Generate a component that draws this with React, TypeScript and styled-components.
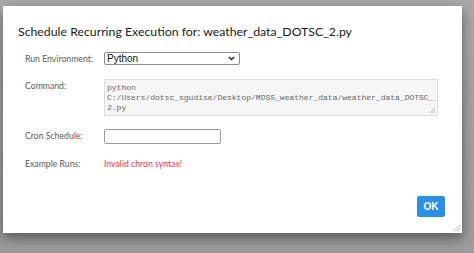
import React from 'react'
import styled, {createGlobalStyle} from 'styled-components'

const GlobalStyle = createGlobalStyle`
  html, body {
    margin: 0;
    padding: 0;
    width: 474px;
    height: 253px;
    overflow: hidden;
    background: #a6a6a6;
  }
`

const Backdrop = styled.div`
  width: 474px;
  height: 253px;
  padding: 6px 0 0 3px;
  box-sizing: border-box;
  background: linear-gradient(to bottom, #a9a9a9, #9c9c9c);
`

const Dialog = styled.div`
  position: relative;
  width: 459px;
  height: 227px;
  box-sizing: border-box;
  background: #fff;
  box-shadow: 0 5px 12px rgba(0, 0, 0, 0.45);
  padding: 16px 17px 0 15px;
  display: flex;
  flex-direction: column;
  font-family: Lato, "Open Sans", sans-serif;
`

const Title = styled.div`
  font-size: 12.3px;
  color: #222;
  line-height: 20px;
  margin-bottom: 10px;
`

const Form = styled.div`
  display: grid;
  grid-template-columns: 79px 1fr;
  row-gap: 13px;
  padding-left: 7px;
  align-items: start;
`

const Label = styled.div<{ top?: number }>`
  font-size: 8.7px;
  color: #5a5a5a;
  line-height: 14px;
  padding-top: ${({top}) => top ?? 0}px;
`

const Select = styled.div`
  width: 136px;
  height: 13px;
  box-sizing: border-box;
  border: 1px solid #8a8a8a;
  border-radius: 2px;
  display: flex;
  align-items: center;
  justify-content: space-between;
  padding: 0 4px 0 2px;
  font-family: "Liberation Sans", Arial, sans-serif;
  font-size: 10px;
  color: #111;
`

const CommandBox = styled.div`
  position: relative;
  width: 334px;
  height: 37px;
  box-sizing: border-box;
  border: 1px solid #dcdcdc;
  background: #f6f6f6;
  padding: 3px 2px;
  font-family: "Liberation Mono", "DejaVu Sans Mono", monospace;
  font-size: 8px;
  line-height: 10px;
  color: #666;
  white-space: pre;
`

const Grip = styled.svg`
  position: absolute;
  right: 1px;
  bottom: 1px;
`

const TextInput = styled.div`
  width: 117px;
  height: 15px;
  box-sizing: border-box;
  border: 1px solid #9a9a9a;
  border-radius: 2px;
  background: #fff;
`

const ErrorText = styled.div`
  font-size: 8.7px;
  line-height: 14px;
  color: #e8334f;
`

const Footer = styled.div`
  margin-top: auto;
  display: flex;
  justify-content: flex-end;
  padding-bottom: 16px;
`

const OkButton = styled.div`
  width: 28px;
  height: 21px;
  border-radius: 2px;
  background: #2b8fe6;
  color: #fff;
  font-family: "Liberation Sans", Arial, sans-serif;
  font-size: 10px;
  font-weight: bold;
  display: flex;
  align-items: center;
  justify-content: center;
`

function App() {
    return (
        <>
            <GlobalStyle/>
            <Backdrop>
                <Dialog>
                    <Title>Schedule Recurring Execution for: weather_data_DOTSC_2.py</Title>
                    <Form>
                        <Label>Run Environment:</Label>
                        <Select>
                            <span>Python</span>
                            <svg width="7" height="5" viewBox="0 0 7 5">
                                <path d="M0.8 1 L3.5 3.6 L6.2 1" fill="none" stroke="#222" strokeWidth="1.4"/>
                            </svg>
                        </Select>
                        <Label top={-2}>Command:</Label>
                        <CommandBox>
                            {'python\nC:/Users/dotsc_sgudise/Desktop/MDSS_weather_data/weather_data_DOTSC_\n2.py'}
                            <Grip width="7" height="7" viewBox="0 0 7 7">
                                <path d="M6 1 L1 6 M6 4 L4 6" stroke="#999" strokeWidth="0.8"/>
                            </Grip>
                        </CommandBox>
                        <Label>Cron Schedule:</Label>
                        <TextInput/>
                        <Label>Example Runs:</Label>
                        <ErrorText>Invalid chron syntax!</ErrorText>
                    </Form>
                    <Footer>
                        <OkButton>OK</OkButton>
                    </Footer>
                    <Grip width="8" height="8" viewBox="0 0 8 8">
                        <path d="M7 1 L1 7 M7 4 L4 7" stroke="#aaa" strokeWidth="0.8"/>
                    </Grip>
                </Dialog>
            </Backdrop>
        </>
    )
}

export default App
